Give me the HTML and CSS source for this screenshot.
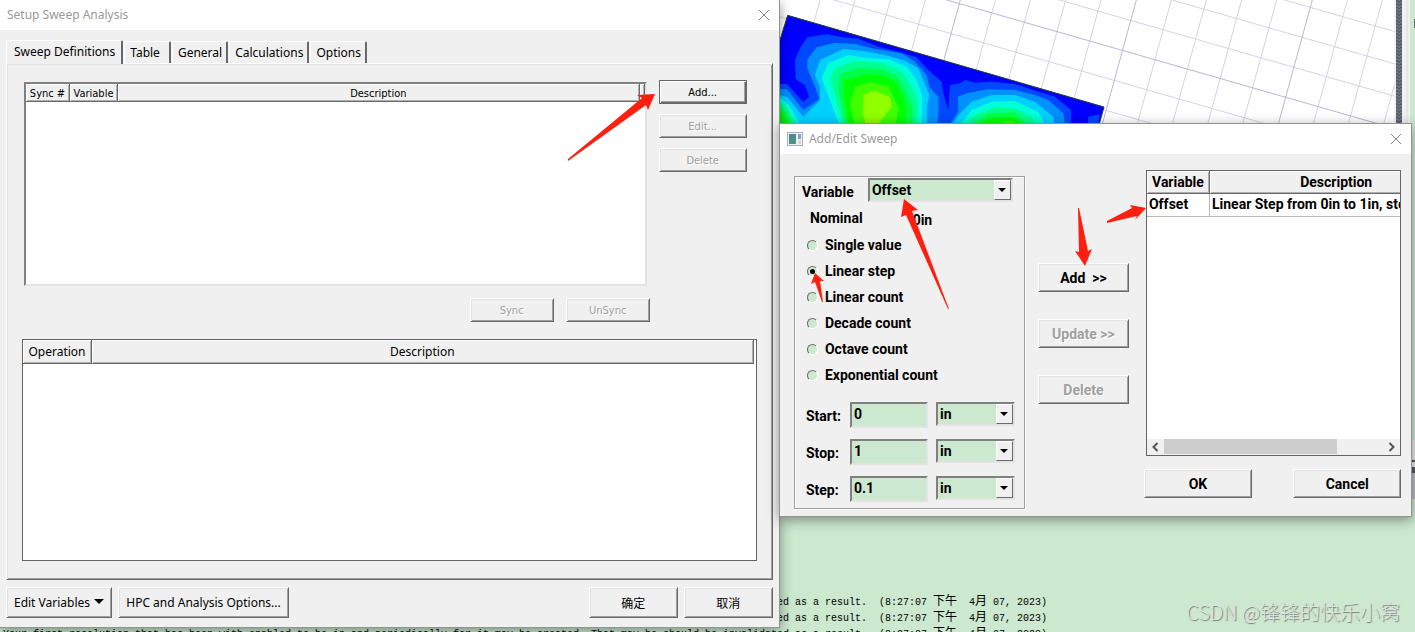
FILE: index.html
```html
<!DOCTYPE html>
<html lang="en">
<head>
<meta charset="utf-8">
<title>Setup Sweep Analysis</title>
<link rel="stylesheet" href="styles.css">
</head>
<body>
<div class="desktop">
  <svg class="plot" viewBox="0 0 1920 372" preserveAspectRatio="xMinYMin slice" aria-hidden="true">
    <rect width="1920" height="372" fill="#fff"/>
    <g stroke="#d3d2e6" stroke-width="3">
      <path d="M135 0l-102 372M240 0l-102 372M346 0l-102 372M451 0l-102 372M661 0l-102 372M766 0l-102 372M872 0l-102 372M978 0l-102 372M1189 0l-102 372M1294 0l-102 372M1400 0l-102 372M1505 0l-102 372M1717 0l-102 372M1822 0l-102 372M1928 0l-102 372"/>
      <path d="M0 -536L1860 -2M0 -439L1860 95M0 -342L1860 192M0 -245L1860 289M0 -51L1860 483M0 46L1860 580"/>
      <path stroke="#b8b6d8" d="M556 0l-102 372M1084 0l-102 372M1612 0l-102 372M0 -148L1860 386"/>
    </g>
    <path fill="#0000ff" stroke="#27402e" stroke-width="3" d="M38 46L987 321L972 375L12 375V130Z"/>
    <path fill="#0048ff" d="M75 145L97 112L155 103L205 112L250 116L310 140L370 155L425 172L460 210L500 245L505 280L520 330L525 255L555 250L570 240L600 248L650 245L720 252L790 275L840 290L888 330V380H12V252L36 252L85 306L102 290L90 255L62 238L60 180ZM940 350L975 343L968 380H938Z"/>
    <path fill="#0090ff" d="M125 142L180 128L240 132L300 147L380 160L420 185L455 225L463 262L490 290V350L485 372H525L550 335L548 290L575 280L640 268L720 270L780 285L820 300L865 340L870 380H12V268L36 268L85 330L133 298L122 265L97 205V178Z"/>
    <path fill="#00d0ff" d="M135 180L205 147L260 152L330 165L385 180L430 205L445 240L463 285L456 320V380H12V285L36 290L85 350L135 300L135 260L120 225ZM528 380L550 345L590 305L650 285L720 285L780 305L835 350L840 380Z"/>
    <path fill="#00ffd8" d="M160 190L220 165L280 175L340 178L395 200L425 240L442 290L440 380H195L165 300L140 235ZM550 380L590 330L650 305L720 303L790 335L815 380ZM12 292L40 312L80 380H12Z"/>
    <path fill="#00ff90" d="M180 205L240 183L320 188L380 215L410 260L427 300V380H205L180 280L165 240ZM565 380L600 345L660 322L720 325L770 350L790 380ZM12 303L36 322L68 380H12Z"/>
    <path fill="#00ff48" d="M195 222L250 203L320 207L370 232L395 280L413 320L412 380H212L190 270ZM585 380L640 340L720 337L765 380ZM12 318L34 336L56 380H12Z"/>
    <path fill="#00ff00" d="M207 240L280 222L335 230L365 250L385 290L395 330L388 380H222L208 300ZM610 380L640 355L715 350L745 380ZM12 332L30 350L42 380H12Z"/>
    <path fill="#40ff00" d="M240 260L285 247L340 258L355 290L372 325L360 380H240L225 310ZM670 380L690 364L715 364L728 380Z"/>
    <path fill="#90ff00" d="M265 285L300 272L345 292L350 320L315 365L300 380H275L263 340Z"/>
    <rect x="1858" width="62" height="372" fill="#f0f0f0"/>
    <rect x="1863" width="18" height="372" fill="#777"/>
    <path stroke="#24456b" stroke-width="3" stroke-dasharray="5 5" d="M1866 0V372M1872 3V372M1878 0V372"/>
    <path stroke="#ddd" stroke-width="3" d="M1896 0V372"/>
    <rect x="1905" width="15" height="372" fill="#cce8cf"/>
    <rect x="1917" y="57" width="3" height="27" fill="#666"/>
  </svg>

  <div class="edge"></div>

  <pre class="log">ed as a result.  (8:27:07 <span>下午</span>  4<span>月</span> 07, 2023)
ed as a result.  (8:27:07 <span>下午</span>  4<span>月</span> 07, 2023)
Your first resolution that has been with enabled to be in and periodically for it may be created. That may be should be invalidated as a result.  (8:27:07 <span>下午</span>  4<span>月</span> 07, 2023)</pre>

  <div class="watermark">CSDN @锋锋的快乐小窝</div>

  <section class="window setup" aria-label="Setup Sweep Analysis">
    <header class="title">
      <h1>Setup Sweep Analysis</h1>
      <button class="close" aria-label="Close"><svg viewBox="0 0 12 12"><path d="M1 1L11 11M11 1L1 11"/></svg></button>
    </header>
    <div class="setup-body">
      <div class="tabs" role="tablist">
        <button class="tab active" role="tab" aria-selected="true">Sweep Definitions</button>
        <button class="tab wide" role="tab">Table</button>
        <button class="tab" role="tab">General</button>
        <button class="tab" role="tab">Calculations</button>
        <button class="tab" role="tab">Options</button>
      </div>
      <div class="panel">
        <div class="definitions">
          <div class="list sunken">
            <table class="small">
              <thead><tr><th class="c-sync">Sync #</th><th class="c-var">Variable</th><th>Description</th><th class="c-end"></th></tr></thead>
            </table>
          </div>
          <div class="side">
            <button class="btn default">Add...</button>
            <button class="btn" disabled>Edit...</button>
            <button class="btn" disabled>Delete</button>
          </div>
        </div>
        <div class="sync-row">
          <button class="btn" disabled>Sync</button>
          <button class="btn" disabled>UnSync</button>
        </div>
        <div class="list operations">
          <table>
            <thead><tr><th class="c-op">Operation</th><th>Description</th></tr></thead>
          </table>
        </div>
      </div>
      <footer class="actions">
        <button class="btn edit-vars">Edit Variables <i class="caret"></i></button>
        <button class="btn hpc">HPC and Analysis Options...</button>
        <span class="spacer"></span>
        <button class="btn answer">确定</button>
        <button class="btn answer">取消</button>
      </footer>
    </div>
  </section>

  <section class="window sweep" aria-label="Add/Edit Sweep">
    <header class="title">
      <svg class="app-icon" viewBox="0 0 16 14"><defs><linearGradient id="pane" x2="1" y2="1"><stop stop-color="#4a7fb0"/><stop offset="1" stop-color="#4f9a72"/></linearGradient></defs><rect x=".5" y=".5" width="15" height="13" fill="#eef2f3" stroke="#a8b0b6"/><rect x="2" y="2" width="7" height="10" fill="url(#pane)"/><rect x="11" y="2" width="3" height="5" fill="#7fa3b8"/><rect x="11" y="8" width="3" height="4" fill="#d3dadd"/></svg>
      <h2>Add/Edit Sweep</h2>
      <button class="close" aria-label="Close"><svg viewBox="0 0 12 12"><path d="M1 1L11 11M11 1L1 11"/></svg></button>
    </header>
    <div class="sweep-body">
      <form class="group">
        <div class="variable">
          <label for="variable">Variable</label>
          <div class="combo"><select id="variable"><option>Offset</option></select><span class="drop"><i class="caret"></i></span></div>
        </div>
        <div class="nominal"><span>Nominal</span><span class="value">0in</span></div>
        <div class="modes">
          <label><input type="radio" name="mode">Single value</label>
          <label><input type="radio" name="mode" checked>Linear step</label>
          <label><input type="radio" name="mode">Linear count</label>
          <label><input type="radio" name="mode">Decade count</label>
          <label><input type="radio" name="mode">Octave count</label>
          <label><input type="radio" name="mode">Exponential count</label>
        </div>
        <div class="range">
          <label for="start">Start:</label><input id="start" type="text" value="0">
          <div class="combo"><select aria-label="Start unit"><option>in</option></select><span class="drop"><i class="caret"></i></span></div>
          <label for="stop">Stop:</label><input id="stop" type="text" value="1">
          <div class="combo"><select aria-label="Stop unit"><option>in</option></select><span class="drop"><i class="caret"></i></span></div>
          <label for="step">Step:</label><input id="step" type="text" value="0.1">
          <div class="combo"><select aria-label="Step unit"><option>in</option></select><span class="drop"><i class="caret"></i></span></div>
        </div>
      </form>
      <div class="transfer">
        <button class="btn">Add&nbsp; &gt;&gt;</button>
        <button class="btn" disabled>Update &gt;&gt;</button>
        <button class="btn" disabled>Delete</button>
      </div>
      <div class="result">
        <div class="list sweeps">
          <div class="view">
            <table>
              <thead><tr><th class="c-name">Variable</th><th>Description</th></tr></thead>
              <tbody><tr><td>Offset</td><td>Linear Step from 0in to 1in, step=0.1in</td></tr></tbody>
            </table>
          </div>
          <div class="scroll">
            <svg viewBox="0 0 16 16"><path d="M10 4L6 8L10 12"/></svg>
            <div class="track"><div class="thumb"></div></div>
            <svg viewBox="0 0 16 16"><path d="M6 4L10 8L6 12"/></svg>
          </div>
        </div>
        <div class="confirm">
          <button class="btn">OK</button>
          <button class="btn">Cancel</button>
        </div>
      </div>
    </div>
  </section>

  <svg class="arrows" viewBox="0 0 1415 632" aria-hidden="true">
    <path d="M655 94L637 95L642 98L568 159V161L646 105L648 110Z"/>
    <path d="M904 199L901 217L906 215L948 309H949L912 211L918 210Z"/>
    <path d="M815 273L811 284L815 282L822 302H823L820 281L824 281Z"/>
    <path d="M1085 266L1075 251L1079 252L1078 208H1079L1088 251L1092 249Z"/>
    <path d="M1146 208L1130 205L1132 208L1107 221V223L1137 216L1135 220Z"/>
  </svg>
</div>
</body>
</html>
```

FILE: styles.css
```css
* { box-sizing: border-box; }

body {
  margin: 0;
  font-family: "Noto Sans", "Noto Sans CJK SC", sans-serif;
  font-size: 12px;
  color: #000;
}

button, input, select { font: inherit; color: inherit; }
h1, h2 { margin: 0; font-size: 12px; font-weight: 400; }

.desktop {
  position: relative;
  min-height: 100vh;
  overflow: hidden;
  background: #cce8cf;
}

.plot {
  position: absolute;
  top: 0;
  right: 0;
  width: 640px;
  height: 124px;
}

.edge {
  position: absolute;
  top: 440px;
  right: 0;
  width: 4px;
  height: 59px;
  background: linear-gradient(#e8e8e8 0 20px, #555 20px 22px, #e8e8e8 22px 27px, #555b62 27px 33px, #b8bcc4 33px);
}

.log {
  position: absolute;
  top: 595px;
  left: 0;
  width: 74%;
  margin: 0;
  text-align: right;
  font: 10px/16px "Liberation Mono", "Noto Sans CJK SC", monospace;
}
.log span { font-size: 12px; line-height: 1; }

.watermark {
  position: absolute;
  right: 15px;
  bottom: 5px;
  font: 300 20px/30px "Noto Sans CJK SC", sans-serif;
  color: #dce5dd;
  text-shadow: 1px 1px 1px #777;
}

.window {
  position: absolute;
  background: #f0f0f0;
  border: solid #8f9690;
  border-width: 0 1px 1px 0;
  box-shadow: 0 3px 12px rgba(0, 0, 0, .4);
}
.setup { left: 0; top: 0; width: 55.1%; }
.sweep { left: 55.05%; top: 123px; width: 44.75%; border-width: 1px; }

.title {
  display: flex;
  align-items: center;
  height: 30px;
  padding: 0 9px 1px 7px;
  background: #fff;
  color: #999;
}
.close {
  display: flex;
  margin-left: auto;
  padding: 0;
  border: 0;
  background: none;
}
.close svg { width: 12px; height: 12px; fill: none; stroke: #888; }
.app-icon { width: 16px; height: 14px; margin-right: 6px; }

.btn {
  display: flex;
  align-items: center;
  justify-content: center;
  padding: 0;
  white-space: nowrap;
  background: #f0f0f0;
  border: 1px solid;
  border-color: #fff #696969 #696969 #fff;
  border-radius: 0;
  box-shadow: inset 1px 1px #e3e3e3, inset -1px -1px #a0a0a0;
}
.btn:disabled { color: #a0a0a0; text-shadow: 1px 1px #fff; }
.btn.default {
  border-color: #696969;
  box-shadow: inset 1px 1px #fff, inset -1px -1px #696969, inset -2px -2px #a0a0a0;
}

.caret {
  width: 0;
  height: 0;
  border: solid transparent;
  border-width: 4px 4px 0;
  border-top-color: #000;
}

.setup-body { padding: 10px 6px 9px 6px; }

.tabs { display: flex; align-items: flex-end; }
.tab {
  height: 22px;
  margin-left: 1px;
  padding: 0 4px 1px 5px;
  background: #f0f0f0;
  border: solid;
  border-width: 1px 2px 0 1px;
  border-color: #fff #696969 #fff #fff;
  border-radius: 2px 2px 0 0;
}
.tab.wide { padding-right: 9px; }
.tab.active {
  position: relative;
  z-index: 1;
  height: 24px;
  margin: 0 0 -1px;
  padding: 0 6px 3px 7px;
}

.panel {
  padding: 16px 15px 18px;
  border: 1px solid;
  border-color: #fff #696969 #696969 #fff;
  box-shadow: inset 1px 1px #e3e3e3, inset -1px -1px #a0a0a0;
}

.definitions { display: flex; gap: 12px; padding: 0 10px 0 2px; }
.list { background: #fff; border: 1px solid #646464; }
.sunken {
  flex: 1;
  min-height: 204px;
  margin-top: 2px;
  border: 2px solid;
  border-color: #808080 #e3e3e3 #e3e3e3 #808080;
}

table { width: 100%; border-collapse: separate; border-spacing: 0; table-layout: fixed; }
th {
  height: 24px;
  padding: 0;
  font-weight: inherit;
  white-space: nowrap;
  background: #f0f0f0;
  border: solid #696969;
  border-width: 0 1px 1px 0;
  box-shadow: inset 1px 1px #fff, inset -1px -1px #b0b0b0;
}
.small, .side, .sync-row { font-family: "DejaVu Sans Condensed", "DejaVu Sans", sans-serif; font-size: 11px; }
.small th { height: 18px; padding-top: 1px; }
.c-sync { width: 44px; }
.c-var { width: 48px; }
.c-end { width: 5px; }
.c-op { width: 69px; }

.side { display: flex; flex-direction: column; gap: 10px; width: 88px; }
.side .btn { height: 24px; }
.sync-row { display: flex; justify-content: flex-end; gap: 12px; padding: 12px 107px 17px 0; }
.sync-row .btn { width: 84px; height: 24px; }
.operations { min-height: 222px; padding-right: 2px; }

.actions { display: flex; gap: 6px; padding-top: 7px; }
.actions .btn { height: 31px; }
.actions .edit-vars { gap: 4px; width: 106px; }
.edit-vars .caret { border-width: 5px 5px 0; border-top-color: #000; margin-bottom: 3px; }
.actions .hpc { width: 171px; }
.spacer { flex: 1; }
.actions .answer { width: 89px; }

.sweep { font-family: Roboto, sans-serif; }
.sweep .title { font-family: "Noto Sans", sans-serif; }
.sweep-body {
  display: grid;
  grid-template-columns: 231px 91px 1fr;
  gap: 13px;
  padding: 16px 10px 7px 14px;
  font-size: 14px;
  font-weight: 700;
  line-height: 16px;
}

.group {
  height: 333px;
  margin-top: 6px;
  padding: 1px 9px 0 7px;
  border: 1px solid #a0a0a0;
  box-shadow: inset 1px 1px #fff, 1px 1px #fff;
}
.combo {
  display: flex;
  height: 24px;
  background: #cce8cf;
  border: 2px solid;
  border-color: #808080 #e3e3e3 #e3e3e3 #808080;
}
.combo select {
  flex: 1;
  min-width: 0;
  padding: 0 2px;
  appearance: none;
  background: none;
  border: 0;
}
.drop {
  display: flex;
  align-items: center;
  justify-content: center;
  width: 17px;
  background: #f0f0f0;
  border: 1px solid;
  border-color: #fff #696969 #696969 #fff;
}
.variable { display: flex; justify-content: space-between; align-items: center; padding-right: 2px; }
.variable label { padding-top: 3px; }
.variable .combo { width: 145px; }
.nominal { display: flex; padding: 8px 0 0 8px; height: 30px; }
.nominal .value { margin: 2px 0 0 50px; }
.modes { display: flex; flex-direction: column; padding-left: 5px; }
.modes label { display: flex; align-items: center; gap: 7px; height: 26px; }
.modes input {
  appearance: none;
  display: grid;
  place-items: center;
  width: 11px;
  height: 11px;
  margin: 0;
  background: #cce8cf;
  border: 1px solid;
  border-color: #696969 #fff #fff #696969;
  border-radius: 50%;
}
.modes input:checked::after { content: ""; width: 5px; height: 5px; border-radius: 50%; background: #000; }
.range {
  display: grid;
  grid-template-columns: 36px 78px 79px;
  gap: 11px 8px;
  padding: 14px 0 0 4px;
}
.range label { padding-top: 6px; }
.range input {
  height: 26px;
  width: 78px;
  padding: 0 2px 3px;
  background: #cce8cf;
  border: 2px solid;
  border-color: #808080 #e3e3e3 #e3e3e3 #808080;
}

.transfer { display: flex; flex-direction: column; gap: 27px; padding-top: 93px; }
.transfer .btn { height: 29px; }

.result { min-width: 0; padding-left: 2px; }
.sweeps { display: flex; flex-direction: column; height: 286px; margin-left: 2px; }
.view { flex: 1; overflow: hidden; }
.sweeps table { width: 125%; }
.c-name { width: 63px; }
.sweeps th { height: 23px; }
.sweeps td {
  height: 23px;
  padding: 0 2px 2px;
  white-space: nowrap;
  border: solid #b8b8b8;
  border-width: 0 1px 1px 0;
}
.scroll { display: flex; height: 16px; background: #f0f0f0; }
.scroll svg { width: 17px; height: 16px; fill: none; stroke: #555; stroke-width: 2; }
.track { flex: 1; }
.thumb { width: 79%; height: 15px; background: #cdcdcd; }
.confirm { display: flex; justify-content: space-between; padding-top: 13px; }
.confirm .btn { width: 108px; height: 29px; }

.arrows {
  position: absolute;
  top: 0;
  left: 0;
  width: 100%;
  fill: #ff1f10;
  pointer-events: none;
}
```
